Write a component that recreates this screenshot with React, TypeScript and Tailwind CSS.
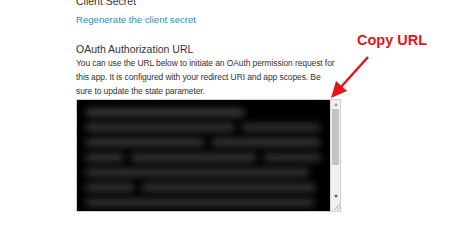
import React from "react";

const ROWS = [
  [{ w: 160, o: 0.6 }],
  [{ w: 150, o: 0.55 }, { w: 80, o: 0.5 }],
  [{ w: 120, o: 0.55 }, { w: 110, o: 0.55 }],
  [{ w: 40, o: 0.55 }, { w: 130, o: 0.55 }, { w: 60, o: 0.5 }],
  [{ w: 225, o: 0.55 }],
  [{ w: 50, o: 0.55 }, { w: 175, o: 0.55 }],
  [{ w: 230, o: 0.5 }],
];

function ScrollBar() {
  return (
    <div className="flex w-[10px] flex-col items-center border-l border-[#d8d8d8] bg-[#f1f1f1]">
      <svg width="10" height="9" viewBox="0 0 10 9">
        <path d="M3 6 L5 3 L7 6 Z" fill="#9a9a9a" />
      </svg>
      <div className="h-[56px] w-[7px] rounded-[1px] bg-[#c3c3c3]" />
      <div className="flex-1" />
      <svg width="10" height="9" viewBox="0 0 10 9">
        <path d="M3 3 L7 3 L5 6 Z" fill="#555" />
      </svg>
      <svg width="10" height="10" viewBox="0 0 10 10">
        <path d="M9 3 L3 9 M9 6 L6 9" stroke="#b0b0b0" strokeWidth="1" />
      </svg>
    </div>
  );
}

export default function App() {
  return (
    <div className="relative h-[240px] w-[474px] overflow-hidden bg-white font-['Liberation_Sans',Arial,sans-serif]">
      <div className="flex flex-col pl-[76px]">
        <div className="-mt-[6px] text-[10.5px] leading-[14px] text-[#333]">Client Secret</div>
        <a className="mt-[5px] text-[9.6px] leading-[14px] text-[#1e8fc6]">Regenerate the client secret</a>
        <div className="mt-[15px] text-[10.5px] leading-[14px] text-[#333]">OAuth Authorization URL</div>
        <p className="w-[261px] text-[8.5px] leading-[14px] tracking-[-0.1px] text-[#333]">
          You can use the URL below to initiate an OAuth permission request for this app. It is
          configured with your redirect URI and app scopes. Be sure to update the state parameter.
        </p>
        <div className="mt-[1px] flex h-[113px] w-[265px] border border-[#cfcfcf]">
          <div className="flex flex-1 flex-col gap-[6px] overflow-hidden bg-black px-[8px] pt-[8px]">
            {ROWS.map((row, i) => (
              <div key={i} className="flex h-[9px] gap-[6px]">
                {row.map((seg, j) => (
                  <div
                    key={j}
                    className="h-full rounded-full bg-[#5a5a5a] blur-[3.5px]"
                    style={{ width: seg.w, opacity: seg.o }}
                  />
                ))}
              </div>
            ))}
          </div>
          <ScrollBar />
        </div>
      </div>

      <div className="absolute left-[357px] top-[31px] text-[14.5px] font-bold leading-[18px] text-[#e3151b]">
        Copy URL
      </div>
      <svg className="absolute left-0 top-0" width="474" height="240">
        <line x1="368" y1="57" x2="341" y2="87" stroke="#e3151b" strokeWidth="2.5" />
        <path d="M331 98 L336 81 L347 91 Z" fill="#e3151b" />
      </svg>
    </div>
  );
}
